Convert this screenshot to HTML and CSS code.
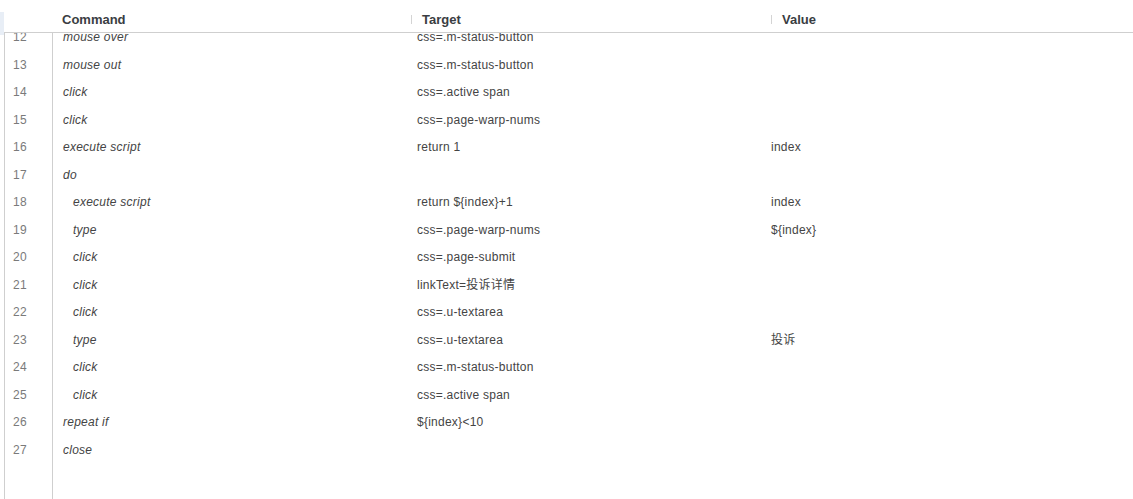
FILE: index.html
```html
<!DOCTYPE html>
<html lang="en">
<head>
<meta charset="utf-8">
<title>Commands</title>
<link rel="stylesheet" href="styles.css">
</head>
<body>
<div class="page">
  <div class="strip"><div class="strip-mark"></div></div>
  <div class="panel">
    <div class="header">
      <div class="h-gutter"></div>
      <div class="h-cell h-command">Command</div>
      <div class="h-cell h-target"><span class="bar"></span>Target</div>
      <div class="h-cell h-value"><span class="bar"></span>Value</div>
    </div>
    <div class="body">
      <div class="gutter">
        <div class="list">
          <div class="num">12</div>
          <div class="num">13</div>
          <div class="num">14</div>
          <div class="num">15</div>
          <div class="num">16</div>
          <div class="num">17</div>
          <div class="num">18</div>
          <div class="num">19</div>
          <div class="num">20</div>
          <div class="num">21</div>
          <div class="num">22</div>
          <div class="num">23</div>
          <div class="num">24</div>
          <div class="num">25</div>
          <div class="num">26</div>
          <div class="num">27</div>
        </div>
      </div>
      <div class="content">
        <div class="list">
          <div class="row"><div class="cmd">mouse over</div><div class="tgt">css=.m-status-button</div><div class="val"></div></div>
          <div class="row"><div class="cmd">mouse out</div><div class="tgt">css=.m-status-button</div><div class="val"></div></div>
          <div class="row"><div class="cmd">click</div><div class="tgt">css=.active span</div><div class="val"></div></div>
          <div class="row"><div class="cmd">click</div><div class="tgt">css=.page-warp-nums</div><div class="val"></div></div>
          <div class="row"><div class="cmd">execute script</div><div class="tgt">return 1</div><div class="val">index</div></div>
          <div class="row"><div class="cmd">do</div><div class="tgt"></div><div class="val"></div></div>
          <div class="row"><div class="cmd indent">execute script</div><div class="tgt">return ${index}+1</div><div class="val">index</div></div>
          <div class="row"><div class="cmd indent">type</div><div class="tgt">css=.page-warp-nums</div><div class="val">${index}</div></div>
          <div class="row"><div class="cmd indent">click</div><div class="tgt">css=.page-submit</div><div class="val"></div></div>
          <div class="row"><div class="cmd indent">click</div><div class="tgt">linkText=投诉详情</div><div class="val"></div></div>
          <div class="row"><div class="cmd indent">click</div><div class="tgt">css=.u-textarea</div><div class="val"></div></div>
          <div class="row"><div class="cmd indent">type</div><div class="tgt">css=.u-textarea</div><div class="val">投诉</div></div>
          <div class="row"><div class="cmd indent">click</div><div class="tgt">css=.m-status-button</div><div class="val"></div></div>
          <div class="row"><div class="cmd indent">click</div><div class="tgt">css=.active span</div><div class="val"></div></div>
          <div class="row"><div class="cmd">repeat if</div><div class="tgt">${index}&lt;10</div><div class="val"></div></div>
          <div class="row"><div class="cmd">close</div><div class="tgt"></div><div class="val"></div></div>
        </div>
      </div>
    </div>
  </div>
</div>
</body>
</html>
```

FILE: styles.css
```css
html, body {
  margin: 0;
  padding: 0;
  height: 100%;
  background: #ffffff;
}

body {
  font-family: "Liberation Sans", Arial, "Noto Sans CJK SC", sans-serif;
  color: #333333;
  overflow: hidden;
}

.page {
  display: flex;
  height: 100vh;
}

.strip {
  width: 4px;
  flex: none;
}

.strip-mark {
  margin-top: 12px;
  height: 23px;
  background: #e8eef6;
}

.panel {
  flex: 1;
  display: flex;
  flex-direction: column;
  min-width: 0;
}

.header {
  display: flex;
  flex: none;
  padding-top: 7px;
  height: 25px;
  line-height: 25px;
  border-bottom: 1px solid #cfcfcf;
  font-size: 13px;
  font-weight: bold;
  color: #3a3d42;
}

.h-gutter {
  width: 48px;
  flex: none;
}

.h-cell {
  display: flex;
  align-items: center;
}

.h-command {
  width: 349px;
  padding-left: 10px;
  flex: none;
}

.h-target {
  width: 360px;
  flex: none;
}

.h-value {
  flex: 1;
}

.bar {
  width: 1px;
  height: 9px;
  background: #d4d4d4;
  margin-right: 10px;
}

.body {
  flex: 1;
  display: flex;
  overflow: hidden;
  border-left: 1px solid #cfcfcf;
  font-size: 12px;
  letter-spacing: 0.25px;
}

.gutter {
  width: 47px;
  flex: none;
  border-right: 1px solid #cfcfcf;
  overflow: hidden;
}

.content {
  flex: 1;
  overflow: hidden;
}

.list {
  margin-top: -9px;
}

.num {
  height: 27.5px;
  line-height: 27.5px;
  padding-left: 8px;
  color: #7a7a7a;
}

.row {
  display: grid;
  grid-template-columns: 364px 354px 1fr;
  height: 27.5px;
  line-height: 27.5px;
}

.cmd {
  padding-left: 10px;
  font-style: italic;
  color: #444444;
}

.cmd.indent {
  padding-left: 20px;
}

.tgt, .val {
  color: #444444;
  white-space: nowrap;
}
```
